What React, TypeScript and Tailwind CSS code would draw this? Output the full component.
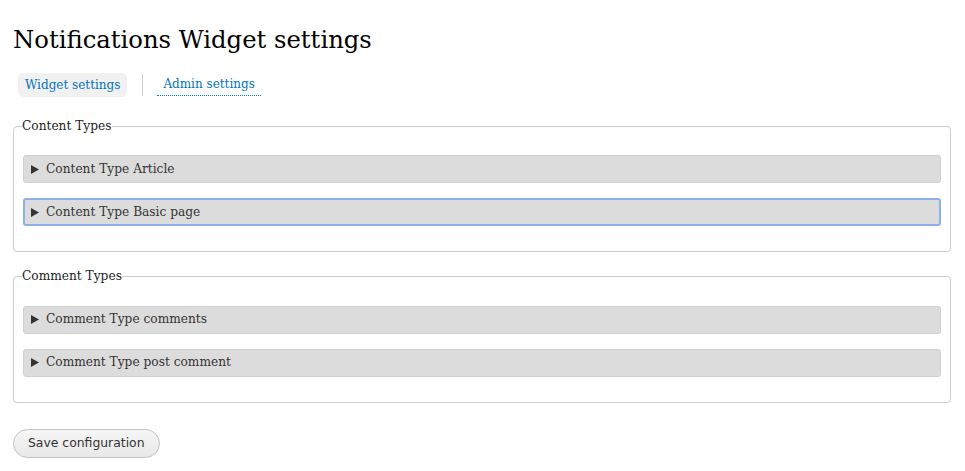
export default function App() {
  const serif = { fontFamily: '"DejaVu Serif", Georgia, serif' }

  function Details({ label, focused }: { label: string; focused?: boolean }) {
    return (
      <div
        className={`flex h-[28px] items-center rounded-[3px] bg-[#dcdcdc] text-[12.2px] text-[#333] ${
          focused ? 'border-2 border-[#8eb0ea] pl-[6px]' : 'border border-[#d0d0d0] pl-[7px]'
        }`}
      >
        <svg width="8" height="9" viewBox="0 0 8 9" className="mr-[7px] shrink-0">
          <polygon points="0,0 8,4.5 0,9" fill="#333" />
        </svg>
        <span>{label}</span>
      </div>
    )
  }

  function Fieldset({ legend, children }: { legend: string; children: React.ReactNode }) {
    return (
      <fieldset className="rounded-[4px] border border-[#ccc] px-[9px] pb-[25px] pt-[20px]">
        <legend className="-ml-[1px] px-0 text-[12.2px] text-[#222]">{legend}</legend>
        <div className="flex flex-col gap-[15px]">{children}</div>
      </fieldset>
    )
  }

  return (
    <div className="min-h-screen bg-white pl-[13px] pr-[14px] pt-[23px]" style={serif}>
      <h1 className="text-[24.3px] leading-[34px] text-[#000]">Notifications Widget settings</h1>

      <div className="mt-[16px] flex items-center pl-[5px]">
        <a className="rounded-[5px] bg-[#f1f1f1] px-[7px] py-[3px] text-[12px] text-[#0074bd]">Widget settings</a>
        <span className="ml-[15px] mr-[14px] h-[22px] w-px bg-[#ccc]" />
        <a className="border-b border-dotted border-[#0074bd] px-[6px] pb-[2px] pt-[1px] text-[12px] text-[#0074bd]">
          Admin settings
        </a>
      </div>

      <div className="mt-[20px] flex flex-col gap-[15px]">
        <Fieldset legend="Content Types">
          <Details label="Content Type Article" />
          <Details label="Content Type Basic page" focused />
        </Fieldset>
        <Fieldset legend="Comment Types">
          <Details label="Comment Type comments" />
          <Details label="Comment Type post comment" />
        </Fieldset>
      </div>

      <button
        className="mt-[26px] h-[29px] rounded-full border border-[#c2c2c2] bg-gradient-to-b from-[#f6f6f6] to-[#e8e8e8] px-[14px] text-[12.4px] text-[#333]"
        style={{ fontFamily: '"DejaVu Sans", Verdana, sans-serif' }}
      >
        Save configuration
      </button>
    </div>
  )
}
